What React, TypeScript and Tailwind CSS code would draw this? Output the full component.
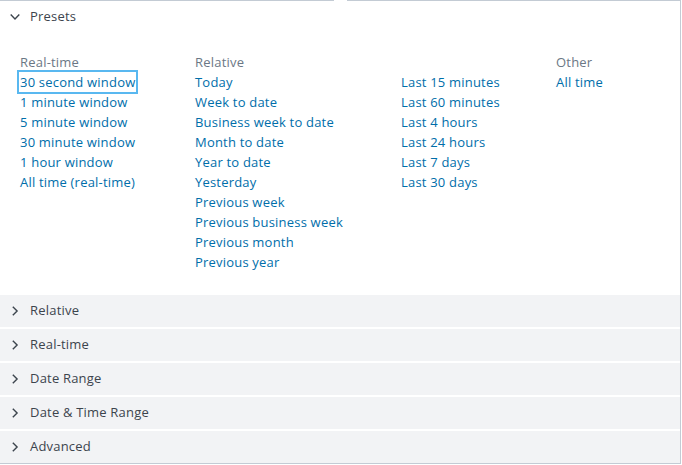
import React from 'react';

const font = { fontFamily: '"Open Sans", "Liberation Sans", sans-serif' };

const columns: { title: string; items: string[] }[] = [
  {
    title: 'Real-time',
    items: ['30 second window', '1 minute window', '5 minute window', '30 minute window', '1 hour window', 'All time (real-time)'],
  },
  {
    title: 'Relative',
    items: [
      'Today',
      'Week to date',
      'Business week to date',
      'Month to date',
      'Year to date',
      'Yesterday',
      'Previous week',
      'Previous business week',
      'Previous month',
      'Previous year',
    ],
  },
  {
    title: '',
    items: ['Last 15 minutes', 'Last 60 minutes', 'Last 4 hours', 'Last 24 hours', 'Last 7 days', 'Last 30 days'],
  },
  { title: 'Other', items: ['All time'] },
];

const colWidths = ['w-[175px]', 'w-[206px]', 'w-[155px]', 'w-[120px]'];

const Chevron: React.FC<{ open?: boolean }> = ({ open }) => (
  <svg width="10" height="10" viewBox="0 0 10 10" className="text-[#3c444d]">
    {open ? (
      <path d="M0.7 2.6 L5 6.9 L9.3 2.6" fill="none" stroke="currentColor" strokeWidth="1.4" />
    ) : (
      <path d="M2.8 0.7 L7.1 5 L2.8 9.3" fill="none" stroke="currentColor" strokeWidth="1.4" />
    )}
  </svg>
);

const sections = ['Relative', 'Real-time', 'Date Range', 'Date & Time Range', 'Advanced'];

export default function App() {
  return (
    <div className="w-[682px] h-[465px] bg-white text-[13px] tracking-[0.2px]" style={font}>
      <div className="w-[681px] border-r border-b border-[#c3cbd4]">
        {/* top edge with notch */}
        <div className="flex h-px">
          <div className="w-[334px] bg-[#c3cbd4]" />
          <div className="w-[13px]" />
          <div className="flex-1 bg-[#c3cbd4]" />
        </div>

        {/* Presets */}
        <div className="flex items-center h-[32px] pl-[10px] gap-[10px] text-[#3c444d]">
          <Chevron open />
          <span>Presets</span>
        </div>
        <div className="flex pl-5 pt-[19px] h-[262px]">
          {columns.map((col, i) => (
            <div key={i} className={colWidths[i]}>
              <div className="h-5 leading-5 text-[#6b7785]">{col.title}</div>
              {col.items.map((it, j) => (
                <div key={it} className="h-5 leading-5">
                  <span
                    className={
                      i === 0 && j === 0
                        ? 'text-[#006eaa] outline-2 outline-[#59b8f0] -ml-[1px] pl-[1px] pr-[1px] py-[1px]'
                        : 'text-[#006eaa]'
                    }
                  >
                    {it}
                  </span>
                </div>
              ))}
            </div>
          ))}
        </div>

        {/* collapsed sections */}
        <div className="flex flex-col gap-[2px]">
          {sections.map((s) => (
            <div key={s} className="flex items-center h-[32px] bg-[#f2f3f5] pl-[10px] gap-[10px] text-[#3c444d]">
              <Chevron />
              <span>{s}</span>
            </div>
          ))}
        </div>
      </div>
    </div>
  );
}
